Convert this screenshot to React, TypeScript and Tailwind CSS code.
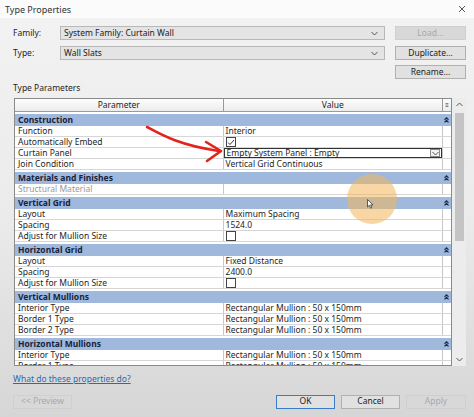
import React from 'react';

type Row =
  | { kind: 'group'; label: string }
  | { kind: 'param'; label: string; value?: string; check?: boolean; select?: boolean; disabled?: boolean };

const mullion = 'Rectangular Mullion : 50 x 150mm';

const rows: Row[] = [
  { kind: 'group', label: 'Construction' },
  { kind: 'param', label: 'Function', value: 'Interior' },
  { kind: 'param', label: 'Automatically Embed', check: true },
  { kind: 'param', label: 'Curtain Panel', value: 'Empty System Panel : Empty', select: true },
  { kind: 'param', label: 'Join Condition', value: 'Vertical Grid Continuous' },
  { kind: 'group', label: 'Materials and Finishes' },
  { kind: 'param', label: 'Structural Material', value: '', disabled: true },
  { kind: 'group', label: 'Vertical Grid' },
  { kind: 'param', label: 'Layout', value: 'Maximum Spacing' },
  { kind: 'param', label: 'Spacing', value: '1524.0' },
  { kind: 'param', label: 'Adjust for Mullion Size', check: false },
  { kind: 'group', label: 'Horizontal Grid' },
  { kind: 'param', label: 'Layout', value: 'Fixed Distance' },
  { kind: 'param', label: 'Spacing', value: '2400.0' },
  { kind: 'param', label: 'Adjust for Mullion Size', check: false },
  { kind: 'group', label: 'Vertical Mullions' },
  { kind: 'param', label: 'Interior Type', value: mullion },
  { kind: 'param', label: 'Border 1 Type', value: mullion },
  { kind: 'param', label: 'Border 2 Type', value: mullion },
  { kind: 'group', label: 'Horizontal Mullions' },
  { kind: 'param', label: 'Interior Type', value: mullion },
  { kind: 'param', label: 'Border 1 Type', value: mullion },
];

const Chevron = ({ up = false }: { up?: boolean }) => (
  <svg width="7" height="5" viewBox="0 0 7 5">
    <path d={up ? 'M0.5 4 L3.5 1 L6.5 4' : 'M0.5 1 L3.5 4 L6.5 1'} fill="none" stroke="#555" strokeWidth="1" />
  </svg>
);

const Collapse = () => (
  <svg width="5" height="6" viewBox="0 0 5 6">
    <path d="M0.5 2.8 L2.5 0.8 L4.5 2.8 M0.5 5.3 L2.5 3.3 L4.5 5.3" fill="none" stroke="#1d2a44" strokeWidth="1.2" />
  </svg>
);

const Checkbox = ({ checked }: { checked: boolean }) => (
  <div className="w-[10px] h-[10px] border border-[#444] bg-white flex items-center justify-center">
    {checked && (
      <svg width="8" height="7" viewBox="0 0 8 7">
        <path d="M1 3.5 L3 5.5 L7 1" fill="none" stroke="#333" strokeWidth="1" />
      </svg>
    )}
  </div>
);

const Combo = ({ text }: { text: string }) => (
  <div className="w-[325px] h-[14px] bg-[#e4e4e4] border border-[#b8b8b8] flex items-center justify-between pl-[3px] pr-[6px] text-[#222]">
    <span>{text}</span>
    <Chevron />
  </div>
);

const Button = ({ label, disabled = false, primary = false, w = 'w-[71px]' }: { label: string; disabled?: boolean; primary?: boolean; w?: string }) => (
  <div
    className={`${w} h-[14px] flex items-center justify-center border ${
      primary ? 'border-[#3b7cc9] border-[1.5px]' : disabled ? 'border-[#cfcfcf]' : 'border-[#b0b0b0]'
    } ${disabled ? 'bg-[#d8d8d8] text-[#a8a8a8]' : 'bg-[#e1e1e1] text-[#222]'}`}
  >
    {label}
  </div>
);

export default function App() {
  return (
    <div className="relative w-[474px] h-[417px] overflow-hidden font-['Noto_Sans','Liberation_Sans',sans-serif] text-[8.5px] leading-none text-[#1e1e1e]">
      {/* title bar */}
      <div className="h-[18px] bg-[#fbfbfb] flex items-center justify-between pl-[5px] pr-[8px]">
        <span className="text-[9px] text-[#333]">Type Properties</span>
        <svg width="8" height="8" viewBox="0 0 8 8">
          <path d="M1 1 L7 7 M7 1 L1 7" stroke="#444" strokeWidth="0.9" />
        </svg>
      </div>

      {/* body */}
      <div className="h-[399px] bg-gradient-to-b from-[#f2f2f2] via-[#ebebeb] to-[#d6d6d6] pl-[13px] pr-[8px] flex flex-col">
        <div className="mt-[8px] flex items-center">
          <span className="w-[47px]">Family:</span>
          <Combo text="System Family: Curtain Wall" />
          <div className="ml-[10px]">
            <Button label="Load..." disabled />
          </div>
        </div>
        <div className="mt-[6px] flex items-center">
          <span className="w-[47px]">Type:</span>
          <Combo text="Wall Slats" />
          <div className="ml-[10px]">
            <Button label="Duplicate..." />
          </div>
        </div>
        <div className="mt-[5px] flex justify-end">
          <Button label="Rename..." />
        </div>

        <div className="mt-[5px] h-[9px] flex items-center">Type Parameters</div>

        {/* table */}
        <div className="mt-[5px] ml-[1px] flex h-[268px]">
          <div className="w-[438px] border border-[#8a8a8a] bg-white overflow-hidden flex flex-col">
            <div className="h-[13px] shrink-0 flex bg-gradient-to-b from-[#fdfdfd] to-[#ececec] border-b border-[#9a9a9a]">
              <div className="w-[209px] border-r border-[#9a9a9a] flex items-center justify-center">Parameter</div>
              <div className="w-[220px] border-r border-[#9a9a9a] flex items-center justify-center">Value</div>
              <div className="w-[8px] flex items-center justify-center text-[6px]">≡</div>
            </div>
            {rows.map((r, i) =>
              r.kind === 'group' ? (
                <div key={i} className="h-[14px] shrink-0 pt-[2px] bg-white">
                  <div className="h-[12px] bg-[#9fb8dc] flex items-center justify-between pl-[3px] pr-[2px]">
                    <span className="font-bold text-[#17233b]">{r.label}</span>
                    <Collapse />
                  </div>
                </div>
              ) : (
                <div key={i} className="h-[11px] shrink-0 flex border-b border-[#d6d6d6]">
                  <div className={`w-[209px] border-r border-[#c8c8c8] flex items-center pl-[3px] ${r.disabled ? 'text-[#9a9a9a]' : ''}`}>
                    {r.label}
                  </div>
                  <div className="w-[220px] border-r border-[#c8c8c8] flex items-center">
                    {r.check !== undefined ? (
                      <div className="pl-[2px]">
                        <Checkbox checked={r.check} />
                      </div>
                    ) : r.select ? (
                      <div className="w-full h-full border border-[#333] flex items-center justify-between pl-[2px] pr-[1px]">
                        <span>{r.value}</span>
                        <div className="w-[10px] h-[8px] border border-[#888] bg-[#f2f2f2] flex items-center justify-center">
                          <Chevron />
                        </div>
                      </div>
                    ) : (
                      <span className="pl-[2px]">{r.value}</span>
                    )}
                  </div>
                  <div className="w-[8px]" />
                </div>
              )
            )}
          </div>
          {/* scrollbar */}
          <div className="w-[14px] bg-[#ececec] flex flex-col items-center">
            <div className="h-[13px] flex items-center">
              <Chevron up />
            </div>
            <div className="w-[9px] h-[128px] mt-[2px] bg-[#c4c4c4]" />
            <div className="flex-1" />
            <div className="h-[13px] flex items-center">
              <Chevron />
            </div>
          </div>
        </div>

        <div className="mt-[9px] text-[#2b69b5] underline">What do these properties do?</div>

        <div className="mt-[11px] flex items-center">
          <Button label="<< Preview" disabled w="w-[59px]" />
          <div className="flex-1" />
          <div className="flex gap-[6px]">
            <Button label="OK" primary w="w-[59px]" />
            <Button label="Cancel" w="w-[59px]" />
            <Button label="Apply" disabled w="w-[60px]" />
          </div>
        </div>
      </div>

      {/* annotation: red arrow */}
      <svg className="absolute left-0 top-0 pointer-events-none" width="474" height="417" viewBox="0 0 474 417">
        <path d="M147 127 C 160 134, 178 145, 219 151" fill="none" stroke="#e3231b" strokeWidth="2.6" strokeLinecap="round" />
        <path d="M206 142 L221 151 L207 161" fill="none" stroke="#e3231b" strokeWidth="2.6" strokeLinecap="round" strokeLinejoin="round" />
      </svg>

      {/* cursor highlight */}
      <div className="absolute left-[347px] top-[174px] w-[50px] h-[50px] rounded-full bg-[#f3b65a]/55" />
      <svg className="absolute left-[367px] top-[199px]" width="7" height="10" viewBox="0 0 7 10">
        <path d="M0.5 0.5 L0.5 8 L2.3 6.3 L3.6 9.2 L4.8 8.7 L3.6 5.9 L6 5.9 Z" fill="#fff" stroke="#222" strokeWidth="0.7" />
      </svg>
    </div>
  );
}
